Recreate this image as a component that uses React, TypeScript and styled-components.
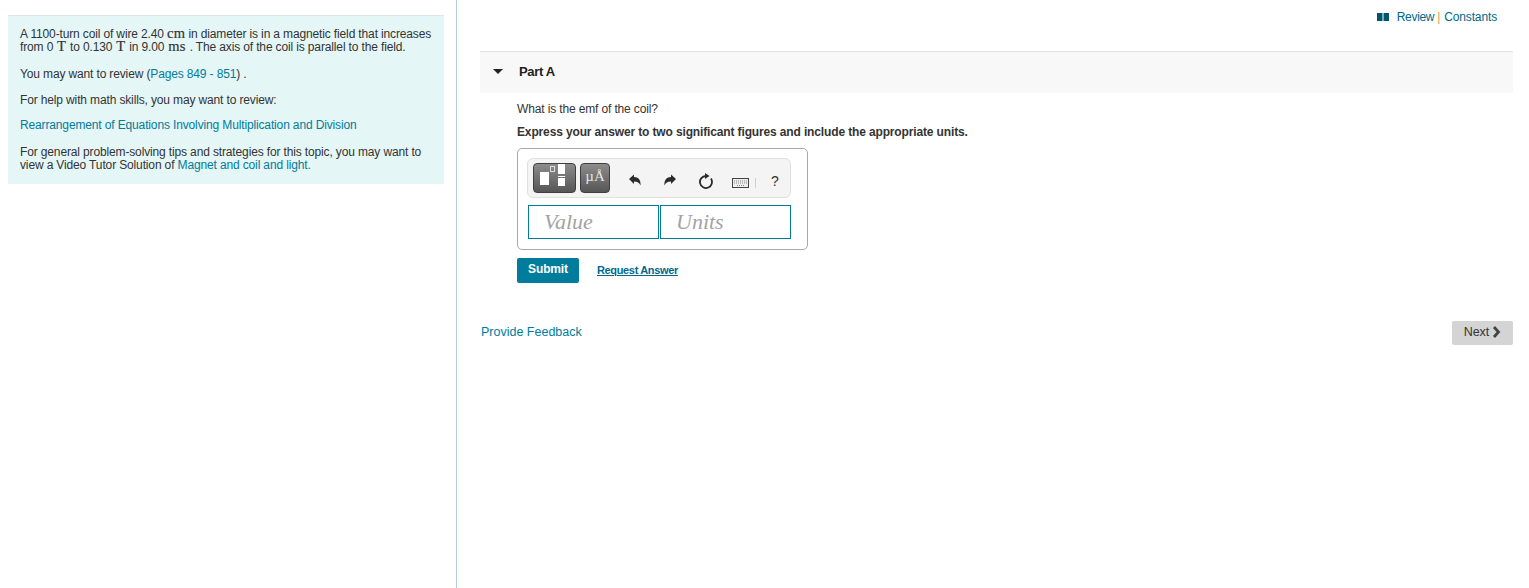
import React from "react";
import styled, { createGlobalStyle } from "styled-components";

const GlobalStyle = createGlobalStyle`
  html, body {
    margin: 0;
    padding: 0;
    background: #fff;
    height: 100%;
    overflow: hidden;
  }
  body {
    font-family: "Liberation Sans", Arial, sans-serif;
    font-size: 12px;
    letter-spacing: -0.14px;
    color: #333;
  }
`;

const Page = styled.div`
  display: flex;
  width: 1513px;
  height: 588px;
`;

const LeftColumn = styled.aside`
  box-sizing: border-box;
  width: 457px;
  flex: none;
  padding: 15px 12px 0 8px;
  border-right: 1px solid #b8cbdc;
`;

const InfoPanel = styled.div`
  box-sizing: border-box;
  height: 169px;
  padding: 12px 12px 0;
  background: #e5f6f7;
  border-top: 1px solid #dbe5e8;
`;

const InfoText = styled.p<{ $gap?: number }>`
  margin: 0 0 ${(p) => p.$gap ?? 13}px;
  line-height: 13px;
  white-space: nowrap;
  color: #333;
`;

const Link = styled.a`
  color: #007c9c;
  text-decoration: none;
`;

const Unit = styled.span<{ $space?: boolean }>`
  margin: 0 ${(p) => (p.$space ? 0.7 : 0)}px;
  font-family: "Liberation Serif", "DejaVu Serif", serif;
  font-size: 14.5px;
  letter-spacing: 0.3px;
  line-height: 0;
  -webkit-text-stroke: 0.2px #333;
  color: #333;
`;

const RightColumn = styled.main`
  flex: 1;
  min-width: 0;
  padding-left: 23px;
`;

const TopLinks = styled.div`
  display: flex;
  justify-content: flex-end;
  align-items: center;
  height: 33px;
  padding: 0 16px 0 0;
`;

const BookIcon = styled.svg`
  width: 12px;
  height: 8px;
  margin-right: 8px;
  fill: #00566f;
`;

const Separator = styled.span`
  margin: 0 4px 0 3px;
  color: #e09a45;
`;

const TopLink = styled.a<{ $tight?: boolean }>`
  color: #00688b;
  letter-spacing: ${(p) => (p.$tight ? -0.3 : -0.14)}px;
`;

const PartHeader = styled.div`
  display: flex;
  align-items: center;
  box-sizing: border-box;
  height: 42px;
  margin-top: 18px;
  padding-bottom: 2px;
  background: #f8f8f8;
  border-top: 1px solid #e2e2e2;
  font-size: 13px;
  color: #222;
`;

const Caret = styled.span`
  width: 0;
  height: 0;
  margin: 0 16px 0 13px;
  border-left: 5px solid transparent;
  border-right: 5px solid transparent;
  border-top: 5px solid #222;
`;

const PartTitle = styled.span`
  font-weight: 700;
  letter-spacing: -0.35px;
`;

const PartBody = styled.div`
  padding: 9px 0 0 37px;
`;

const Question = styled.p`
  margin: 0 0 9px;
  line-height: 14px;
  color: #333;
`;

const Instruction = styled.p`
  margin: 0 0 9px;
  line-height: 14px;
  font-weight: 700;
  color: #333;
`;

const AnswerBox = styled.div`
  box-sizing: border-box;
  width: 291px;
  height: 102px;
  padding: 9px 10px 0;
  border: 1px solid #a9a9a9;
  border-radius: 5px;
`;

const Toolbar = styled.div`
  display: flex;
  align-items: center;
  box-sizing: border-box;
  width: 264px;
  height: 40px;
  margin-left: -1px;
  padding: 0 0 0 5px;
  background: #f4f4f4;
  border: 1px solid #e0e0e0;
  border-radius: 6px;
`;

const ToolButton = styled.div<{ $width: number }>`
  box-sizing: border-box;
  width: ${(p) => p.$width}px;
  height: 30px;
  margin-right: 4px;
  background: linear-gradient(#8c8c8c, #565656);
  border: 1px solid #3f3f3f;
  border-radius: 4px;
`;

const TemplateIcon = styled.svg`
  display: block;
  width: 41px;
  height: 28px;
  fill: #fff;
`;

const UnitGlyph = styled.span`
  display: block;
  font-family: "Liberation Serif", serif;
  font-size: 15px;
  letter-spacing: 0;
  line-height: 25px;
  text-align: center;
  color: #e4e4e4;
`;

const ActionIcon = styled.svg<{ $left: number }>`
  flex: none;
  width: 16px;
  height: 16px;
  margin-left: ${(p) => p.$left}px;
  margin-top: 6px;
  fill: #2b2b2b;
`;

const KeyboardIcon = styled.svg`
  flex: none;
  width: 17px;
  height: 10px;
  margin-left: 18px;
  margin-top: 10px;
`;

const ToolDivider = styled.span`
  width: 1px;
  height: 10px;
  margin: 10px 0 0 6px;
  background: #cfcfcf;
`;

const Help = styled.span`
  margin-left: 15px;
  margin-top: 5px;
  font-size: 14px;
  color: #333;
`;

const Inputs = styled.div`
  display: flex;
  gap: 1px;
  margin-top: 7px;
`;

const Field = styled.div`
  box-sizing: border-box;
  width: 131px;
  height: 34px;
  padding-left: 15px;
  border: 1px solid #007c9c;
  font-family: "Liberation Serif", serif;
  font-style: italic;
  font-size: 22px;
  letter-spacing: 0;
  line-height: 32px;
  color: #a3a3a3;
  background: #fff;
`;

const Actions = styled.div`
  display: flex;
  align-items: center;
  gap: 18px;
  margin-top: 8px;
`;

const SubmitButton = styled.button`
  width: 62px;
  height: 25px;
  padding: 0 0 3px;
  border: 0;
  border-radius: 2px;
  background: #007c9c;
  color: #fff;
  font-family: inherit;
  font-size: 12px;
  letter-spacing: -0.14px;
  font-weight: 700;
`;

const RequestLink = styled.a`
  margin-bottom: 1px;
  font-size: 11px;
  letter-spacing: -0.35px;
  font-weight: 700;
  color: #00688b;
  text-decoration: underline;
`;

const Footer = styled.div`
  display: flex;
  justify-content: space-between;
  align-items: center;
  margin-top: 38px;
  height: 24px;
`;

const Feedback = styled.a`
  padding: 0 0 2px 1px;
  font-size: 12.5px;
  letter-spacing: 0;
  color: #007c9c;
`;

const NextButton = styled.button`
  display: flex;
  align-items: center;
  justify-content: center;
  gap: 3px;
  width: 61px;
  height: 24px;
  padding: 0 0 2px;
  border: 0;
  border-radius: 2px;
  background: #d4d4d4;
  color: #333;
  font-family: inherit;
  font-size: 12.5px;
`;

const Chevron = styled.svg`
  width: 9px;
  height: 12px;
  fill: none;
  stroke: #444;
  stroke-width: 2.8;
`;

const App: React.FC = () => {
  return (
    <Page>
      <GlobalStyle />
      <LeftColumn>
        <InfoPanel>
          <InfoText $gap={14}>
            A 1100-turn coil of wire 2.40 <Unit>cm</Unit> in diameter is in a magnetic field that increases
            <br />
            from 0 <Unit $space>T</Unit> to 0.130 <Unit $space>T</Unit> in 9.00 <Unit $space>ms</Unit> . The axis of the coil is parallel to the field.
          </InfoText>
          <InfoText>
            You may want to review (<Link>Pages 849 - 851</Link>) .
          </InfoText>
          <InfoText $gap={12}>For help with math skills, you may want to review:</InfoText>
          <InfoText $gap={14}>
            <Link>Rearrangement of Equations Involving Multiplication and Division</Link>
          </InfoText>
          <InfoText $gap={0}>
            For general problem-solving tips and strategies for this topic, you may want to
            <br />
            view a Video Tutor Solution of <Link>Magnet and coil and light.</Link>
          </InfoText>
        </InfoPanel>
      </LeftColumn>
      <RightColumn>
        <TopLinks>
          <BookIcon viewBox="0 0 12 8">
            <path d="M0 0h5.500v8H0zM6.500 0H12v8H6.500z" />
          </BookIcon>
          <TopLink $tight>Review</TopLink>
          <Separator>|</Separator>
          <TopLink>Constants</TopLink>
        </TopLinks>
        <PartHeader>
          <Caret />
          <PartTitle>Part A</PartTitle>
        </PartHeader>
        <PartBody>
          <Question>What is the emf of the coil?</Question>
          <Instruction>Express your answer to two significant figures and include the appropriate units.</Instruction>
          <AnswerBox>
            <Toolbar>
              <ToolButton $width={43}>
                <TemplateIcon viewBox="0 0 41 28">
                  <path d="M6 8h9v13H6z" />
                  <path d="M16 2h5v6h-5zM17 3v4h3V3z" fillRule="evenodd" fill="#ddd" />
                  <path d="M24 0h7v10h-7zM24 12h7v1h-7zM24 14h7v8h-7z" />
                </TemplateIcon>
              </ToolButton>
              <ToolButton $width={30}>
                <UnitGlyph>µÅ</UnitGlyph>
              </ToolButton>
              <ActionIcon $left={13} viewBox="0 0 16 16">
                <path d="M2 6l5-4.500V4c4.500 0 7 3 6.500 8.500C12.500 10 10.500 8.500 7 8.500V11z" />
              </ActionIcon>
              <ActionIcon $left={19} viewBox="0 0 16 16">
                <path d="M14 6L9 1.500V4C4.500 4 2 7 2.500 12.500 3.500 10 5.500 8.500 9 8.500V11z" />
              </ActionIcon>
              <ActionIcon $left={20} viewBox="0 0 16 16">
                <path d="M12.900 5.600A6 6 0 1 1 8 3" fill="none" stroke="#2b2b2b" strokeWidth="1.800" />
                <path d="M7 0l4.500 3L7 6z" />
              </ActionIcon>
              <KeyboardIcon viewBox="0 0 17 10">
                <rect x="0.500" y="0.500" width="16" height="9" fill="#eee" stroke="#444" />
                <path d="M2 3h13M2 5h13M5 7.500h7" stroke="#888" strokeDasharray="1 1" fill="none" />
              </KeyboardIcon>
              <ToolDivider />
              <Help>?</Help>
            </Toolbar>
            <Inputs>
              <Field>Value</Field>
              <Field>Units</Field>
            </Inputs>
          </AnswerBox>
          <Actions>
            <SubmitButton>Submit</SubmitButton>
            <RequestLink>Request Answer</RequestLink>
          </Actions>
        </PartBody>
        <Footer>
          <Feedback>Provide Feedback</Feedback>
          <NextButton>
            Next
            <Chevron viewBox="0 0 9 12">
              <path d="M2 1l4.500 5L2 11" />
            </Chevron>
          </NextButton>
        </Footer>
      </RightColumn>
    </Page>
  );
};

export default App;
